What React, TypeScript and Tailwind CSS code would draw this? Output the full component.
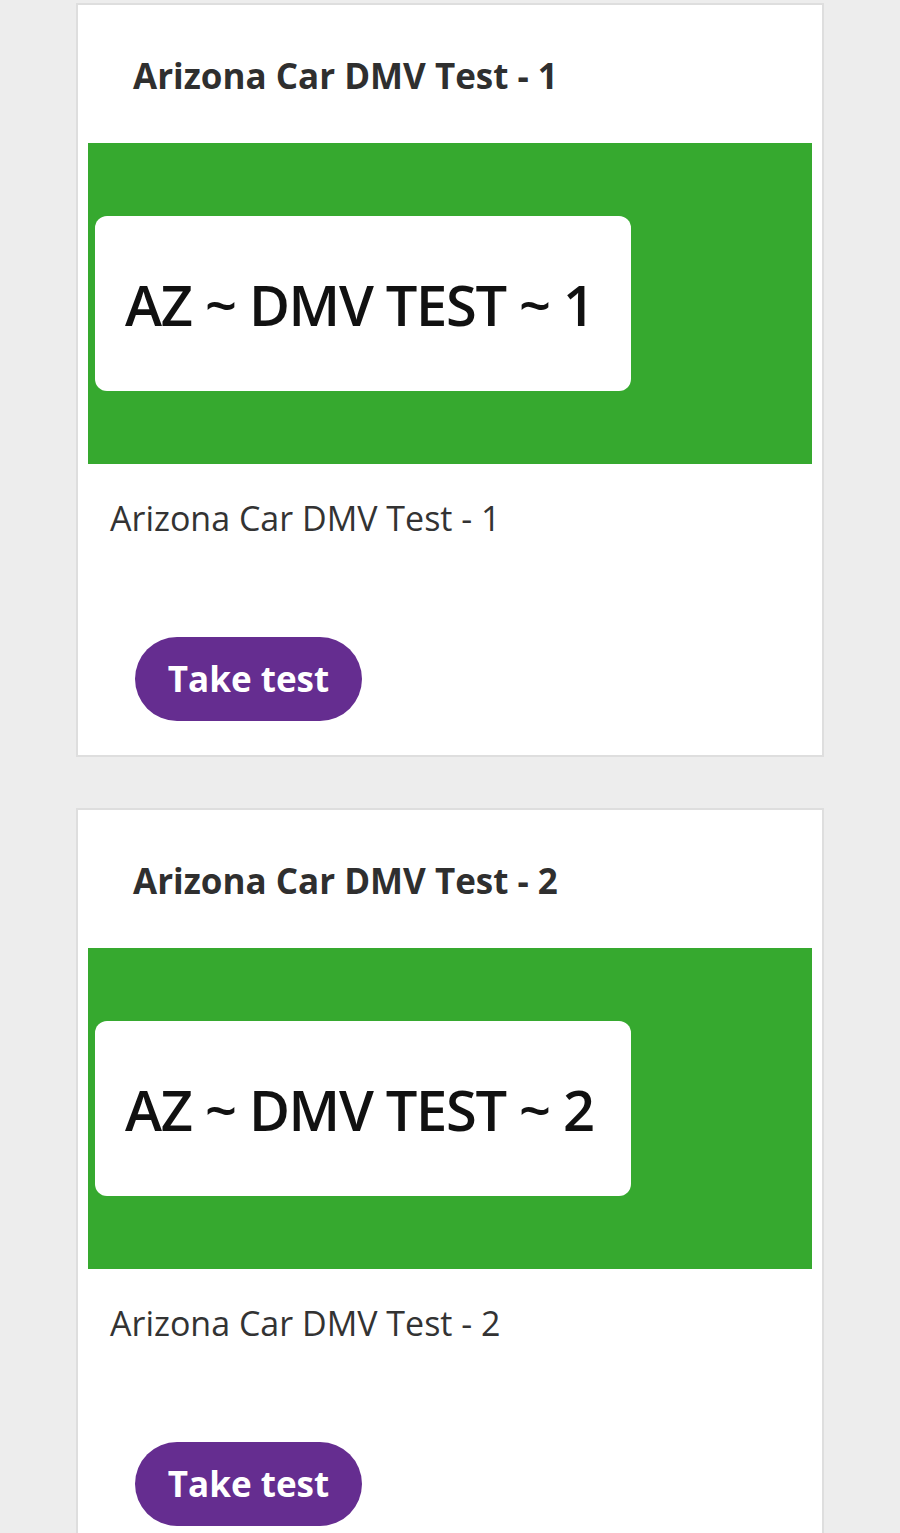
import React from 'react';

const tests = [1, 2];

const TestCard: React.FC<{ n: number }> = ({ n }) => {
  return (
    <div className="w-[748px] border-2 border-[#dedede] bg-white">
      <div className="flex h-[138px] items-center pl-[55px] pt-[3px]">
        <h2 className="text-[35px] font-bold leading-none text-[#2f2f2f]">
          Arizona Car DMV Test - {n}
        </h2>
      </div>
      <div className="mx-[10px] h-[321px] bg-[#36a92f] pt-[73px] pl-[7px]">
        <div className="flex h-[175px] w-[536px] items-center rounded-[12px] bg-white pl-[30px]">
          <span className="text-[56px] font-semibold leading-none tracking-[-1.3px] text-[#111]">
            AZ ~ DMV TEST ~ {n}
          </span>
        </div>
      </div>
      <p className="mt-[34px] pl-[32px] text-[34px] leading-[40px] text-[#333]">
        Arizona Car DMV Test - {n}
      </p>
      <div className="pl-[57px] pt-[99px] pb-[34px]">
        <button className="flex h-[84px] w-[227px] items-center justify-center rounded-full bg-[#652d90] text-[35px] font-bold text-white">
          Take test
        </button>
      </div>
    </div>
  );
};

export default function App() {
  return (
    <div
      className="min-h-screen bg-[#ededed] pl-[76px] pt-[3px]"
      style={{ fontFamily: '"Open Sans", sans-serif' }}
    >
      <div className="flex flex-col gap-[51px]">
        {tests.map((n) => (
          <TestCard key={n} n={n} />
        ))}
      </div>
    </div>
  );
}
